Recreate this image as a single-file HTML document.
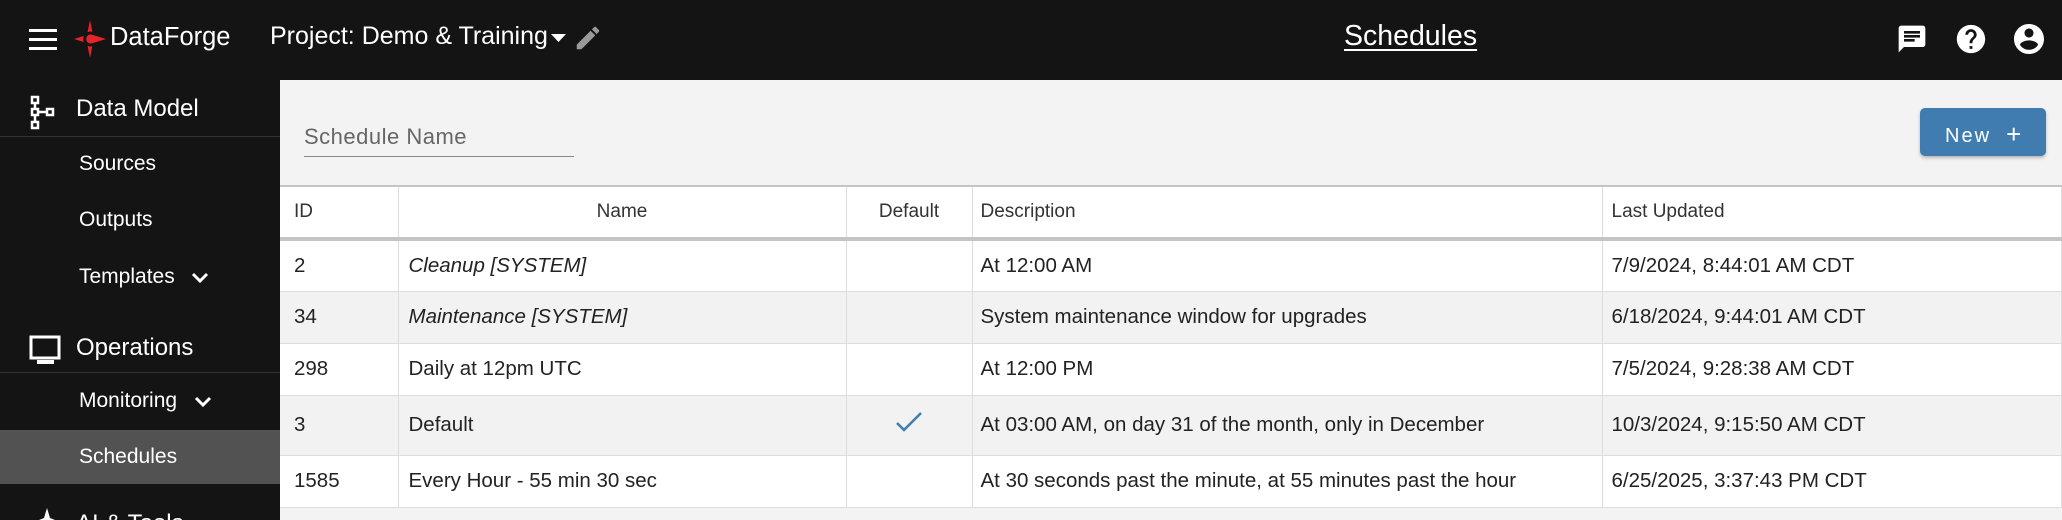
<!DOCTYPE html>
<html><head><meta charset="utf-8"><style>
*{box-sizing:border-box;margin:0;padding:0}
html,body{width:2062px;height:520px;overflow:hidden}
body{background:#f3f3f3;font-family:"Liberation Sans",sans-serif;position:relative}
.hdr{position:absolute;left:0;top:0;width:2062px;height:80px;background:#141414;color:#fff}
.side{position:absolute;left:0;top:80px;width:280px;height:440px;background:#141414;color:#fff;overflow:hidden}
.abs{position:absolute;white-space:nowrap}
.si{position:absolute;left:79px;font-size:21px;color:#fff}
.sec{position:absolute;left:76px;font-size:24px}
.sep{position:absolute;left:0;width:280px;height:1px;background:#333}
table{position:absolute;left:280px;top:185px;width:1782px;border-collapse:collapse;background:#fff;font-size:20.5px;color:#222}
td,th{border-right:1px solid #ddd;border-bottom:1px solid #ddd;padding:0 0 0 14px;text-align:left;white-space:nowrap}
th{height:53px;font-weight:normal;color:#333;font-size:19px;border-bottom:4px solid #c4c4c4;border-top:2px solid #c4c4c4}
tr.g td{background:#f2f2f2}
td{height:52px}
</style></head><body>
<div class="hdr">
 <svg class="abs" style="left:29px;top:28px" width="30" height="24" viewBox="0 0 30 24"><rect y="1" width="28" height="3" fill="#fff"/><rect y="10" width="28" height="3" fill="#fff"/><rect y="19" width="28" height="3" fill="#fff"/></svg>
 <svg class="abs" style="left:74px;top:20px" width="32" height="40" viewBox="0 0 32 40"><path d="M16 0 L19 15 L32 19 L19 23 L16 38 L13 23 L0 19 L13 15Z" fill="#e8232a"/><path d="M20 14 A6 6 0 1 0 20 24" stroke="#141414" stroke-width="3" fill="none"/></svg>
 <div class="abs" style="left:110px;top:23px;font-size:25.5px;color:#fff">DataForge</div>
 <div class="abs" style="left:270px;top:22px;font-size:25px;color:#fff">Project: Demo &amp; Training</div>
 <svg class="abs" style="left:551px;top:34px" width="16" height="10"><path d="M0 0h15l-7.5 8z" fill="#fff"/></svg>
 <svg class="abs" style="left:573px;top:23px" width="30" height="30" viewBox="0 0 24 24"><path d="M3 17.25V21h3.75L17.81 9.94l-3.75-3.75L3 17.25zM20.71 7.04a1 1 0 000-1.41l-2.34-2.34a1 1 0 00-1.41 0l-1.83 1.83 3.75 3.75 1.83-1.83z" fill="#9a9a9a"/></svg>
 <div class="abs" style="left:1344px;top:20px;font-size:28.5px;color:#fff;text-decoration:underline;text-underline-offset:4px">Schedules</div>
 <svg class="abs" style="left:1896px;top:23px" width="32" height="32" viewBox="0 0 24 24"><path d="M20 2H4c-1.1 0-2 .9-2 2v18l4-4h14c1.1 0 2-.9 2-2V4c0-1.1-.9-2-2-2zM6 9h12v2H6V9zm8 5H6v-2h8v2zm4-6H6V6h12v2z" fill="#fff"/></svg>
 <svg class="abs" style="left:1954px;top:22px" width="34" height="34" viewBox="0 0 24 24"><path d="M12 2C6.48 2 2 6.48 2 12s4.48 10 10 10 10-4.48 10-10S17.52 2 12 2zm1 17h-2v-2h2v2zm2.07-7.750l-.9.92C13.45 12.9 13 13.5 13 15h-2v-.5c0-1.1.45-2.1 1.170-2.83l1.24-1.26c.37-.36.59-.86.59-1.41 0-1.1-.9-2-2-2s-2 .9-2 2H8c0-2.21 1.79-4 4-4s4 1.79 4 4c0 .88-.36 1.68-.93 2.25z" fill="#fff"/></svg>
 <svg class="abs" style="left:2011px;top:21px" width="36" height="36" viewBox="0 0 24 24"><path d="M12 2C6.48 2 2 6.48 2 12s4.48 10 10 10 10-4.48 10-10S17.52 2 12 2zm0 3c1.66 0 3 1.34 3 3s-1.34 3-3 3-3-1.34-3-3 1.34-3 3-3zm0 14.2c-2.5 0-4.71-1.28-6-3.22.03-1.99 4-3.08 6-3.08 1.99 0 5.97 1.09 6 3.08-1.29 1.94-3.5 3.22-6 3.22z" fill="#fff"/></svg>
</div>
<div class="side">
 <svg class="abs" style="left:30px;top:15px" width="26" height="36" viewBox="0 0 26 36"><g fill="none" stroke="#fff" stroke-width="2.5"><rect x="2" y="2" width="6" height="6"/><rect x="2" y="14" width="6" height="6"/><rect x="2" y="27" width="6" height="6"/><rect x="17" y="14" width="6" height="6"/><path d="M5 8v6M5 20v7M8 17h9"/></g></svg>
 <div class="sec" style="top:15px">Data Model</div>
 <div class="sep" style="top:56px"></div>
 <div class="si" style="top:72px">Sources</div>
 <div class="si" style="top:128px">Outputs</div>
 <div class="si" style="top:185px">Templates</div>
 <svg class="abs" style="left:191px;top:192px" width="18" height="12"><path d="M2 2l7 7 7-7" stroke="#fff" stroke-width="3" fill="none"/></svg>
 <svg class="abs" style="left:29px;top:255px" width="34" height="32" viewBox="0 0 34 32"><rect x="2" y="2" width="28" height="21" fill="none" stroke="#fff" stroke-width="3"/><rect x="8" y="25" width="17" height="4" fill="#fff"/></svg>
 <div class="sec" style="top:254px">Operations</div>
 <div class="sep" style="top:292px"></div>
 <div class="si" style="top:309px">Monitoring</div>
 <svg class="abs" style="left:194px;top:316px" width="18" height="12"><path d="M2 2l7 7 7-7" stroke="#fff" stroke-width="3" fill="none"/></svg>
 <div class="abs" style="left:0;top:350px;width:280px;height:54px;background:#525252"></div>
 <div class="si" style="top:365px">Schedules</div>
 <svg class="abs" style="left:30px;top:428px" width="34" height="14"><path d="M17 0l3 10 10 4H4l10-4z" fill="#fff"/></svg>
 <div class="sec" style="top:430px">AI &amp; Tools</div>
</div>
<div class="abs" style="left:304px;top:124px;font-size:22px;color:#666;letter-spacing:.5px">Schedule Name</div>
<div class="abs" style="left:304px;top:156px;width:270px;height:1px;background:#888"></div>
<div class="abs" style="left:1920px;top:108px;width:126px;height:48px;background:#407cb0;border-radius:5px;box-shadow:0 2px 3px rgba(0,0,0,.25);color:#fff;font-size:20px;letter-spacing:2px;padding:10px 0 0 25px">New&nbsp;&nbsp;<span style="font-size:26px;position:relative;top:1px">+</span></div>
<table>
<colgroup><col style="width:118px"><col style="width:448px"><col style="width:126px"><col style="width:630px"><col></colgroup>
<tr><th>ID</th><th style="text-align:center;padding:0">Name</th><th style="text-align:center;padding:0">Default</th><th style="padding-left:8px">Description</th><th style="padding-left:9px">Last Updated</th></tr>
<tr><td>2</td><td style="padding-left:10px"><i>Cleanup [SYSTEM]</i></td><td></td><td style="padding-left:8px">At 12:00 AM</td><td style="padding-left:9px">7/9/2024, 8:44:01 AM CDT</td></tr>
<tr class="g"><td>34</td><td style="padding-left:10px"><i>Maintenance [SYSTEM]</i></td><td></td><td style="padding-left:8px">System maintenance window for upgrades</td><td style="padding-left:9px">6/18/2024, 9:44:01 AM CDT</td></tr>
<tr><td>298</td><td style="padding-left:10px">Daily at 12pm UTC</td><td></td><td style="padding-left:8px">At 12:00 PM</td><td style="padding-left:9px">7/5/2024, 9:28:38 AM CDT</td></tr>
<tr class="g"><td style="height:60px">3</td><td style="padding-left:10px">Default</td><td style="text-align:center;padding:0"><svg width="28" height="24" viewBox="0 0 28 24"><path d="M2 13l7 7L26 3" stroke="#407cb0" stroke-width="2.5" fill="none"/></svg></td><td style="padding-left:8px">At 03:00 AM, on day 31 of the month, only in December</td><td style="padding-left:9px">10/3/2024, 9:15:50 AM CDT</td></tr>
<tr><td>1585</td><td style="padding-left:10px">Every Hour - 55 min 30 sec</td><td></td><td style="padding-left:8px">At 30 seconds past the minute, at 55 minutes past the hour</td><td style="padding-left:9px">6/25/2025, 3:37:43 PM CDT</td></tr>
</table>
</body></html>
